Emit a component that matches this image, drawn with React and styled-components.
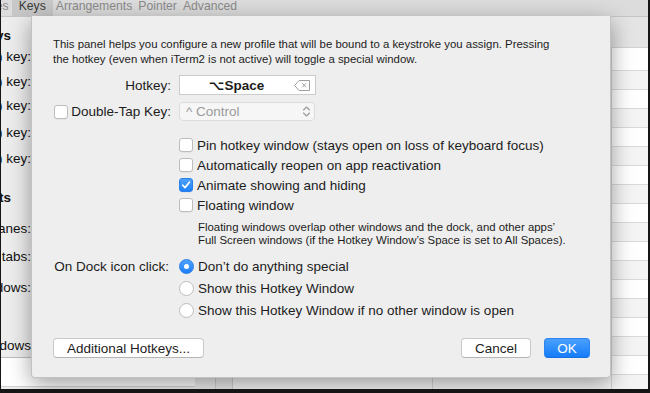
import React from "react";
import styled, { createGlobalStyle } from "styled-components";

const GlobalStyle = createGlobalStyle`
  html, body {
    margin: 0;
    padding: 0;
    background: #111;
  }
  body {
    font-family: "Liberation Sans", Arial, "DejaVu Sans", sans-serif;
    -webkit-font-smoothing: antialiased;
  }
`;

const Screen = styled.div`
  width: 650px;
  height: 393px;
  box-sizing: border-box;
  padding: 0 2px 4px 1px;
  background: #151515;
  overflow: hidden;
`;

const PrefsWindow = styled.div`
  position: relative;
  height: 100%;
  display: flex;
  flex-direction: column;
  background: #ececec;
  overflow: hidden;
`;

const TabBar = styled.div`
  height: 16px;
  flex: none;
  display: flex;
  background: #dcdcdc;
  border-bottom: 1px solid #c6c6c6;
  margin-left: -36px;
`;

const Tab = styled.div`
  padding: 0 ${(p) => (p.$active ? 7 : 3)}px;
  height: 16px;
  line-height: 12px;
  font-size: 12.2px;
  color: ${(p) => (p.$active ? "#3a3a3a" : "#8a8a8a")};
  background: ${(p) => (p.$active ? "#c8c8c8" : "transparent")};
  white-space: nowrap;
`;

const Body = styled.div`
  flex: 1;
  display: flex;
  min-height: 0;
`;

const LeftPane = styled.div`
  width: 214px;
  flex: none;
  display: flex;
  flex-direction: column;
  background: #ededed;
`;

const LeftRow = styled.div`
  width: ${(p) => (p.$heading ? 10 : 30)}px;
  display: flex;
  justify-content: flex-end;
  margin-top: ${(p) => p.$mt}px;
  height: 20px;
  line-height: 20px;
  font-size: 13.5px;
  font-weight: ${(p) => (p.$heading ? 700 : 400)};
  color: #111;
  white-space: nowrap;
`;

const LeftBox = styled.div`
  margin-top: 1px;
  height: 28px;
  background: #fff;
  border-top: 1px solid #bdbdbd;
  border-bottom: 1px solid #d0d0d0;
  margin-right: 20px;
`;

const Splitter = styled.div`
  width: 16px;
  flex: none;
  background: #e9e9e9;
  border-left: 1px solid #cfcfcf;
  border-right: 1px solid #cfcfcf;
`;

const Table = styled.div`
  flex: 1;
  display: flex;
  flex-direction: column;
  background: #fff;
`;

const TableHeader = styled.div`
  height: 30px;
  flex: none;
  background: #e4e4e4;
  border-bottom: 1px solid #d2d2d2;
`;

const TableRow = styled.div`
  flex: none;
  height: ${(p) => p.$h}px;
  display: grid;
  grid-template-columns: 200px 179px 1fr;
  background: ${(p) => (p.$alt ? "#f4f4f4" : "#fff")};
  border-bottom: 1px solid #dadada;
`;

const Cell = styled.div`
  border-right: 1px solid #d6d6d6;
  &:last-child {
    border-right: none;
  }
`;

/* dialog sheet */

const Sheet = styled.div`
  position: absolute;
  left: 30px;
  top: 16px;
  width: 580px;
  height: 362px;
  box-sizing: border-box;
  padding: 20px 20px 0 21px;
  background: #eeeeee;
  border: 1px solid rgba(0, 0, 0, 0.18);
  border-top: none;
  border-radius: 0 0 4px 4px;
  box-shadow: 0 6px 22px rgba(0, 0, 0, 0.38);
  color: #1c1c1c;
  font-size: 13.5px;
`;

const Intro = styled.p`
  margin: 0;
  font-size: 11.4px;
  line-height: 15px;
  padding-top: 1px;
`;

const Row = styled.div`
  display: flex;
  align-items: ${(p) => (p.$top ? "flex-start" : "center")};
  margin-top: ${(p) => p.$mt}px;
`;

const Label = styled.div`
  width: ${(p) => p.$w || 118}px;
  margin-right: ${(p) => 126 - (p.$w || 118)}px;
  flex: none;
  display: flex;
  align-items: center;
  justify-content: flex-end;
  white-space: nowrap;
  height: ${(p) => p.$h || 20}px;
`;

const Controls = styled.div`
  display: flex;
  flex-direction: column;
`;

const HotkeyField = styled.div`
  position: relative;
  width: 137px;
  height: 20px;
  box-sizing: border-box;
  background: #fff;
  border: 1px solid #cbcbcb;
  display: flex;
  align-items: center;
  justify-content: center;
  padding-right: 22px;
  font-weight: 700;
  font-size: 13.5px;
`;

const ClearIcon = styled.svg`
  position: absolute;
  right: 5px;
  top: 4px;
`;

const Popup = styled.div`
  width: 136px;
  height: 19px;
  box-sizing: border-box;
  background: #f6f6f6;
  border: 1px solid #dcdcdc;
  border-radius: 4px;
  display: flex;
  align-items: center;
  justify-content: space-between;
  padding: 0 3px 0 6px;
  color: #9b9b9b;
`;

const Option = styled.div`
  display: flex;
  align-items: center;
  height: ${(p) => p.$h}px;
  white-space: nowrap;
`;

const Box = styled.span`
  width: 14px;
  height: 14px;
  box-sizing: border-box;
  flex: none;
  margin-right: ${(p) => p.$gap ?? 4}px;
  border-radius: 3px;
  display: inline-flex;
  align-items: center;
  justify-content: center;
  background: ${(p) => (p.$on ? "linear-gradient(#4fa2fc, #1d7ff8)" : "#fff")};
  border: 1px solid ${(p) => (p.$on ? "#2a7fe8" : "#bdbdbd")};
  box-shadow: 0 0.5px 0.5px rgba(0, 0, 0, 0.08);
`;

const Radio = styled.span`
  width: 15px;
  height: 15px;
  box-sizing: border-box;
  flex: none;
  margin-right: 4px;
  border-radius: 50%;
  display: inline-flex;
  align-items: center;
  justify-content: center;
  background: ${(p) => (p.$on ? "linear-gradient(#4fa2fc, #1d7ff8)" : "#fff")};
  border: 1px solid ${(p) => (p.$on ? "#2a7fe8" : "#bdbdbd")};
  &::after {
    content: "";
    display: ${(p) => (p.$on ? "block" : "none")};
    width: 5px;
    height: 5px;
    border-radius: 50%;
    background: #fff;
  }
`;

const Note = styled.p`
  margin: 6px 0 0 19px;
  font-size: 11.4px;
  line-height: 13px;
  white-space: nowrap;
`;

const Footer = styled.div`
  display: flex;
  align-items: center;
  margin-top: 17px;
`;

const Button = styled.button`
  height: 20px;
  width: ${(p) => p.$w}px;
  margin-left: ${(p) => p.$ml || 0}px;
  padding: 0;
  box-sizing: border-box;
  font-family: inherit;
  font-size: 13.5px;
  color: ${(p) => (p.$primary ? "#fff" : "#1c1c1c")};
  background: ${(p) => (p.$primary ? "linear-gradient(#4aa0fd, #167cf9)" : "#fff")};
  border: 1px solid ${(p) => (p.$primary ? "#2b84f0" : "#c9c9c9")};
  border-bottom-color: ${(p) => (p.$primary ? "#1a6fde" : "#b5b5b5")};
  border-radius: 4px;
`;

const Spacer = styled.div`
  flex: 1;
`;

const Check = () => (
  <svg width="10" height="10" viewBox="0 0 10 10">
    <path d="M1.8 5.2 L4 7.6 L8.4 2.2" fill="none" stroke="#fff" strokeWidth="1.7" strokeLinecap="round" strokeLinejoin="round" />
  </svg>
);

const leftRows = [
  { t: "Hotkeys", mt: 9, heading: true },
  { t: "(⌥) key:", mt: 1 },
  { t: "(⌥) key:", mt: 5 },
  { t: "(⌥) key:", mt: 4 },
  { t: "(⌥) key:", mt: 7 },
  { t: "(⌥) key:", mt: 6 },
  { t: "Hotkeys and Shortcuts", mt: 19, heading: true },
  { t: "Switch panes:", mt: 11 },
  { t: "Switch tabs:", mt: 8 },
  { t: "Switch windows:", mt: 11 },
  { t: "Windows", mt: 38 },
];

const rowHeights = [22, 18, 18, 18, 18, 18, 18, 18, 18, 18, 18, 18, 18, 18, 18, 18, 18, 18, 18];

export default function App() {
  return (
    <>
      <GlobalStyle />
      <Screen>
        <PrefsWindow>
          <TabBar>
            <Tab>Profiles</Tab>
            <Tab $active>Keys</Tab>
            <Tab>Arrangements</Tab>
            <Tab>Pointer</Tab>
            <Tab>Advanced</Tab>
          </TabBar>
          <Body>
            <LeftPane>
              {leftRows.map((r, i) => (
                <LeftRow key={i} $mt={r.mt} $heading={r.heading}>
                  {r.t}
                </LeftRow>
              ))}
              <LeftBox />
            </LeftPane>
            <Splitter />
            <Table>
              <TableHeader />
              {rowHeights.map((h, i) => (
                <TableRow key={i} $h={h} $alt={i % 2 === 1}>
                  <Cell />
                  <Cell />
                  <Cell />
                </TableRow>
              ))}
            </Table>
          </Body>

          <Sheet>
            <Intro>
              This panel helps you configure a new profile that will be bound to a keystroke you assign. Pressing
              <br />
              the hotkey (even when iTerm2 is not active) will toggle a special window.
            </Intro>

            <Row $mt={8}>
              <Label>Hotkey:</Label>
              <HotkeyField>
                ⌥Space
                <ClearIcon width="16" height="11" viewBox="0 0 16 11">
                  <path d="M5 0.5 H15.5 V10.5 H5 L0.6 5.5 Z" fill="none" stroke="#a0a0a0" strokeWidth="1" />
                  <path d="M8.3 3.3 L12 7.3 M12 3.3 L8.3 7.3" stroke="#a0a0a0" strokeWidth="1" />
                </ClearIcon>
              </HotkeyField>
            </Row>

            <Row $mt={7}>
              <Label $h={19}>
                <Box $gap={3} />
                Double-Tap Key:
              </Label>
              <Popup>
                <span>^ Control</span>
                <svg width="9" height="13" viewBox="0 0 9 13">
                  <path d="M1.5 5 L4.5 2 L7.5 5 M1.5 8 L4.5 11 L7.5 8" fill="none" stroke="#9a9a9a" strokeWidth="1.1" strokeLinecap="round" strokeLinejoin="round" />
                </svg>
              </Popup>
            </Row>

            <Row $mt={14} $top>
              <Label />
              <Controls>
                <Option $h={20}>
                  <Box />
                  Pin hotkey window (stays open on loss of keyboard focus)
                </Option>
                <Option $h={20}>
                  <Box />
                  Automatically reopen on app reactivation
                </Option>
                <Option $h={20}>
                  <Box $on>
                    <Check />
                  </Box>
                  Animate showing and hiding
                </Option>
                <Option $h={20}>
                  <Box />
                  Floating window
                </Option>
                <Note>
                  Floating windows overlap other windows and the dock, and other apps’
                  <br />
                  Full Screen windows (if the Hotkey Window’s Space is set to All Spaces).
                </Note>
              </Controls>
            </Row>

            <Row $mt={8} $top>
              <Label $h={22} $w={116}>On Dock icon click:</Label>
              <Controls>
                <Option $h={22}>
                  <Radio $on />
                  Don’t do anything special
                </Option>
                <Option $h={22}>
                  <Radio />
                  Show this Hotkey Window
                </Option>
                <Option $h={22}>
                  <Radio />
                  Show this Hotkey Window if no other window is open
                </Option>
              </Controls>
            </Row>

            <Footer>
              <Button $w={151}>Additional Hotkeys...</Button>
              <Spacer />
              <Button $w={70}>Cancel</Button>
              <Button $w={46} $ml={13} $primary>
                OK
              </Button>
            </Footer>
          </Sheet>
        </PrefsWindow>
      </Screen>
    </>
  );
}
